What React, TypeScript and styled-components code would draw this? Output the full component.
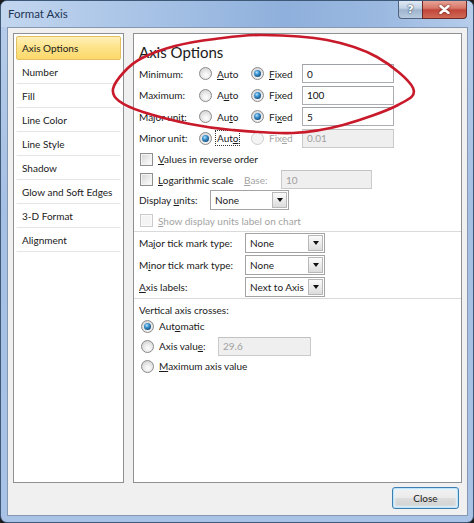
import React from 'react'
import styled, { createGlobalStyle } from 'styled-components'

const GlobalStyle = createGlobalStyle`
  html, body {
    margin: 0;
    padding: 0;
    background: #1c1c1c;
  }
  body {
    font-family: Lato, "Noto Sans", sans-serif;
    font-size: 10px;
    color: #1a1a1a;
  }
  * {
    box-sizing: border-box;
  }
`

const categories = [
  'Axis Options',
  'Number',
  'Fill',
  'Line Color',
  'Line Style',
  'Shadow',
  'Glow and Soft Edges',
  '3-D Format',
  'Alignment',
]

// hand drawn red loop round the min / max / major unit rows
const loop: [number, number][] = [
  [113, 89], [124, 72], [142, 58], [175, 46], [215, 39], [262, 35],
  [327, 40], [377, 57], [413, 88], [398, 105], [343, 125], [293, 133],
  [232, 130], [190, 124], [143, 112], [119, 101],
]

const smoothPath = (pts: [number, number][]) => {
  const n = pts.length
  const f = (v: number) => v.toFixed(1)
  let d = `M${pts[0][0]},${pts[0][1]}`
  for (let i = 0; i < n; i++) {
    const p0 = pts[(i - 1 + n) % n]
    const p1 = pts[i]
    const p2 = pts[(i + 1) % n]
    const p3 = pts[(i + 2) % n]
    const c1x = p1[0] + (p2[0] - p0[0]) / 6
    const c1y = p1[1] + (p2[1] - p0[1]) / 6
    const c2x = p2[0] - (p3[0] - p1[0]) / 6
    const c2y = p2[1] - (p3[1] - p1[1]) / 6
    d += ` C${f(c1x)},${f(c1y)} ${f(c2x)},${f(c2y)} ${p2[0]},${p2[1]}`
  }
  return d + ' Z'
}

const App: React.FC = () => {
  return (
    <>
      <GlobalStyle />
      <Window>
        <TitleBar>
          <Title>Format Axis</Title>
          <CaptionButtons>
            <HelpButton>?</HelpButton>
            <CloseCaption>
              <svg width='11' height='9' viewBox='0 0 11 9'>
                <path d='M1.5 1 L9.5 8 M9.5 1 L1.5 8' stroke='#fff' strokeWidth='2.4' strokeLinecap='round' />
              </svg>
            </CloseCaption>
          </CaptionButtons>
        </TitleBar>

        <Client>
          <Panels>
            <CategoryList>
              {categories.map((c, i) => (
                <CategoryItem key={c} $selected={i === 0}>
                  {c}
                </CategoryItem>
              ))}
            </CategoryList>

            <OptionsPanel>
              <Heading>Axis Options</Heading>

              <FormRow $h={21.5}>
                <Label $w={59}>Minimum:</Label>
                <Choice $w={52}>
                  <Radio />
                  <span><U>A</U>uto</span>
                </Choice>
                <Choice $w={52}>
                  <Radio $checked />
                  <span><U>F</U>ixed</span>
                </Choice>
                <TextBox $w={92}>0</TextBox>
              </FormRow>
              <FormRow $h={21.5}>
                <Label $w={59}>Maximum:</Label>
                <Choice $w={52}>
                  <Radio />
                  <span>A<U>u</U>to</span>
                </Choice>
                <Choice $w={52}>
                  <Radio $checked />
                  <span>F<U>i</U>xed</span>
                </Choice>
                <TextBox $w={92}>100</TextBox>
              </FormRow>
              <FormRow $h={21.5}>
                <Label $w={59}>Major unit:</Label>
                <Choice $w={52}>
                  <Radio />
                  <span>Au<U>t</U>o</span>
                </Choice>
                <Choice $w={52}>
                  <Radio $checked />
                  <span>Fi<U>x</U>ed</span>
                </Choice>
                <TextBox $w={92}>5</TextBox>
              </FormRow>
              <FormRow $h={21.5}>
                <Label $w={59}>Minor unit:</Label>
                <Choice $w={52}>
                  <Radio $checked />
                  <Focused>Aut<U>o</U></Focused>
                </Choice>
                <Choice $w={52} $disabled>
                  <Radio $disabled />
                  <span>Fix<U>e</U>d</span>
                </Choice>
                <TextBox $w={92} $disabled>0.01</TextBox>
              </FormRow>

              <FormRow $h={20.5}>
                <Choice>
                  <Checkbox />
                  <span><U>V</U>alues in reverse order</span>
                </Choice>
              </FormRow>
              <FormRow $h={20.5}>
                <Choice $w={105}>
                  <Checkbox />
                  <span><U>L</U>ogarithmic scale</span>
                </Choice>
                <Label $w={37} $disabled><U>B</U>ase:</Label>
                <TextBox $w={91} $disabled>10</TextBox>
              </FormRow>
              <FormRow $h={20.5}>
                <Label $w={71}>Display <U>u</U>nits:</Label>
                <Select $w={79}>
                  <SelectValue>None</SelectValue>
                  <SelectArrow />
                </Select>
              </FormRow>
              <FormRow $h={20.5}>
                <Choice $disabled>
                  <Checkbox $disabled />
                  <span><U>S</U>how display units label on chart</span>
                </Choice>
              </FormRow>

              <Separator />

              <FormRow $h={22}>
                <Label $w={106}>Ma<U>j</U>or tick mark type:</Label>
                <Select $w={80}>
                  <SelectValue>None</SelectValue>
                  <SelectArrow />
                </Select>
              </FormRow>
              <FormRow $h={22}>
                <Label $w={106}>M<U>i</U>nor tick mark type:</Label>
                <Select $w={80}>
                  <SelectValue>None</SelectValue>
                  <SelectArrow />
                </Select>
              </FormRow>
              <FormRow $h={22}>
                <Label $w={106}><U>A</U>xis labels:</Label>
                <Select $w={80}>
                  <SelectValue>Next to Axis</SelectValue>
                  <SelectArrow />
                </Select>
              </FormRow>

              <Separator />

              <GroupLabel>Vertical axis crosses:</GroupLabel>
              <FormRow $h={20} $indent={1}>
                <Choice>
                  <Radio $checked />
                  <span>Aut<U>o</U>matic</span>
                </Choice>
              </FormRow>
              <FormRow $h={20} $indent={1}>
                <Choice $w={78}>
                  <Radio />
                  <span>Axis valu<U>e</U>:</span>
                </Choice>
                <TextBox $w={93} $disabled>29.6</TextBox>
              </FormRow>
              <FormRow $h={20} $indent={1}>
                <Choice>
                  <Radio />
                  <span><U>M</U>aximum axis value</span>
                </Choice>
              </FormRow>
            </OptionsPanel>
          </Panels>

          <Footer>
            <Button>Close</Button>
          </Footer>
        </Client>

        <Annotation width='474' height='523' viewBox='0 0 474 523'>
          <path d={smoothPath(loop)} fill='none' stroke='#c81a2a' strokeWidth='2.6' strokeLinejoin='round' />
        </Annotation>
      </Window>
    </>
  )
}

const Window = styled.div`
  position: relative;
  width: 474px;
  height: 523px;
  display: flex;
  flex-direction: column;
  border: 1px solid #3e5878;
  border-radius: 7px;
  background: linear-gradient(180deg, #b7cdea 0%, #a6c0e4 40%, #a9c3e6 100%);
  overflow: hidden;
`

const TitleBar = styled.div`
  height: 26px;
  flex: none;
  display: flex;
  align-items: flex-start;
  justify-content: space-between;
  padding-left: 7px;
  background: linear-gradient(90deg, #c2d6ef 0%, #a8c3e6 30%, #8fb0dc 60%, #9ab8e0 80%, #b6cdeb 100%);
`

const Title = styled.span`
  margin-top: 6px;
  font-size: 11.5px;
  color: #1e3655;
`

const CaptionButtons = styled.div`
  display: flex;
  margin-right: 6px;
  margin-top: -1px;
`

const CaptionButton = styled.div`
  height: 19px;
  display: flex;
  align-items: center;
  justify-content: center;
  border: 1px solid #50647f;
  border-top: none;
`

const HelpButton = styled(CaptionButton)`
  width: 24px;
  border-right: none;
  border-bottom-left-radius: 4px;
  background: linear-gradient(180deg, #e3ecf6 0%, #c3d3e6 45%, #9fb4cd 55%, #b8cbe0 100%);
  color: #fff;
  font-family: "DejaVu Sans", sans-serif;
  font-weight: bold;
  font-size: 11px;
  text-shadow: 0 0 2px #33475f, 0 0 1px #33475f;
`

const CloseCaption = styled(CaptionButton)`
  width: 45px;
  border-color: #6b2a28;
  border-bottom-right-radius: 4px;
  background: linear-gradient(180deg, #e9a99c 0%, #d7786a 45%, #c2463a 55%, #cf6a55 100%);
  svg {
    filter: drop-shadow(0 0 1px #5a1a14);
  }
`

const Client = styled.div`
  flex: 1;
  display: flex;
  flex-direction: column;
  margin: 0 5px 6px 6px;
  padding: 5px 5px 0 5px;
  border: 1px solid #8498b2;
  background: #f0f0f0;
`

const Panels = styled.div`
  height: 450px;
  flex: none;
  display: flex;
  gap: 9px;
`

const CategoryList = styled.div`
  width: 111px;
  flex: none;
  padding: 2px;
  background: #fff;
  border: 1px solid #8e9194;
`

const CategoryItem = styled.div<{ $selected?: boolean }>`
  height: 24px;
  display: flex;
  align-items: center;
  padding-left: 5px;
  white-space: nowrap;
  border: 1px solid ${(p) => (p.$selected ? '#e3c160' : 'transparent')};
  border-bottom-color: ${(p) => (p.$selected ? '#e3c160' : '#e6e6e6')};
  border-radius: ${(p) => (p.$selected ? '2px' : '0')};
  background: ${(p) =>
    p.$selected ? 'linear-gradient(180deg, #fff0b8 0%, #fde48c 45%, #fcd86a 100%)' : 'transparent'};
`

const OptionsPanel = styled.div`
  flex: 1;
  padding: 0 5px;
  background: #fff;
  border: 1px solid #8e9194;
`

const Heading = styled.div`
  height: 29px;
  padding-top: 8px;
  font-size: 15px;
  line-height: 20px;
  color: #1a1a1a;
`

const FormRow = styled.div<{ $h: number; $indent?: number }>`
  height: ${(p) => p.$h}px;
  display: flex;
  align-items: center;
  padding-left: ${(p) => p.$indent ?? 0}px;
  white-space: nowrap;
`

const Label = styled.span<{ $w?: number; $disabled?: boolean }>`
  width: ${(p) => (p.$w ? `${p.$w}px` : 'auto')};
  flex: none;
  color: ${(p) => (p.$disabled ? '#a3a3a3' : 'inherit')};
`

const Choice = styled.label<{ $w?: number; $disabled?: boolean }>`
  width: ${(p) => (p.$w ? `${p.$w}px` : 'auto')};
  flex: none;
  display: flex;
  align-items: center;
  gap: 5px;
  color: ${(p) => (p.$disabled ? '#a3a3a3' : 'inherit')};
`

const U = styled.span`
  text-decoration: underline;
  text-underline-offset: 1px;
`

const Focused = styled.span`
  outline: 1px dotted #333;
  outline-offset: 1px;
`

const Radio = styled.span<{ $checked?: boolean; $disabled?: boolean }>`
  position: relative;
  width: 13px;
  height: 13px;
  flex: none;
  margin-left: 1px;
  border-radius: 50%;
  border: 1px solid ${(p) => (p.$disabled ? '#cdcdcd' : '#8a8a8a')};
  background: ${(p) =>
    p.$disabled
      ? '#f4f4f4'
      : 'radial-gradient(circle at 55% 65%, #ffffff 0%, #eeeeee 35%, #c9c9c9 100%)'};
  &::after {
    content: '';
    display: ${(p) => (p.$checked ? 'block' : 'none')};
    position: absolute;
    inset: 2px;
    border-radius: 50%;
    background: radial-gradient(circle at 40% 35%, #b9e4fb 0%, #3a92cf 35%, #174f80 75%, #0d3152 100%);
  }
`

const Checkbox = styled.span<{ $disabled?: boolean }>`
  width: 13px;
  height: 13px;
  flex: none;
  margin-left: 1px;
  border: 1px solid ${(p) => (p.$disabled ? '#cbcbcb' : '#8e8f8f')};
  background: ${(p) =>
    p.$disabled ? '#f4f4f4' : 'linear-gradient(135deg, #d4d4d4 0%, #ededed 55%, #ffffff 100%)'};
  box-shadow: inset 0 0 0 1px ${(p) => (p.$disabled ? '#fafafa' : '#f4f4f4')};
`

const TextBox = styled.div<{ $w: number; $disabled?: boolean }>`
  width: ${(p) => p.$w}px;
  height: 19px;
  flex: none;
  display: flex;
  align-items: center;
  padding-left: 4px;
  border: 1px solid ${(p) => (p.$disabled ? '#cacaca' : '#abadb3')};
  border-top-color: ${(p) => (p.$disabled ? '#c2c2c2' : '#9ea1a8')};
  background: ${(p) => (p.$disabled ? '#efefef' : '#fff')};
  color: ${(p) => (p.$disabled ? '#a0a0a0' : '#111')};
`

const Select = styled.div<{ $w: number }>`
  width: ${(p) => p.$w}px;
  height: 20px;
  flex: none;
  display: flex;
  border: 1px solid #a3a3a3;
  background: #fff;
`

const SelectValue = styled.span`
  flex: 1;
  display: flex;
  align-items: center;
  padding-left: 4px;
  overflow: hidden;
`

const SelectArrow = styled.span`
  width: 15px;
  flex: none;
  margin: 1px;
  display: flex;
  align-items: center;
  justify-content: center;
  border: 1px solid #b8b8b8;
  background: linear-gradient(180deg, #fbfbfb 0%, #ececec 50%, #dcdcdc 100%);
  &::before {
    content: '';
    border-left: 3.5px solid transparent;
    border-right: 3.5px solid transparent;
    border-top: 4px solid #111;
  }
`

const Separator = styled.div`
  height: 1px;
  margin: 0 -5px;
  background: #dadada;
`

const GroupLabel = styled.div`
  height: 17px;
  padding-top: 5px;
  line-height: 12px;
`

const Footer = styled.div`
  flex: 1;
  display: flex;
  justify-content: flex-end;
  align-items: flex-start;
  padding: 4px 3px 0 0;
`

const Button = styled.div`
  width: 67px;
  height: 22px;
  display: flex;
  align-items: center;
  justify-content: center;
  border: 1px solid #3c7fb1;
  border-radius: 3px;
  background: linear-gradient(180deg, #f2f2f2 0%, #ebebeb 48%, #dddddd 52%, #cfcfcf 100%);
  box-shadow: inset 0 0 0 1px #bfe3f8, inset 0 0 2px 2px #e3f3fd;
  color: #1a1a1a;
`

const Annotation = styled.svg`
  position: absolute;
  left: -1px;
  top: -1px;
  pointer-events: none;
`

export default App
